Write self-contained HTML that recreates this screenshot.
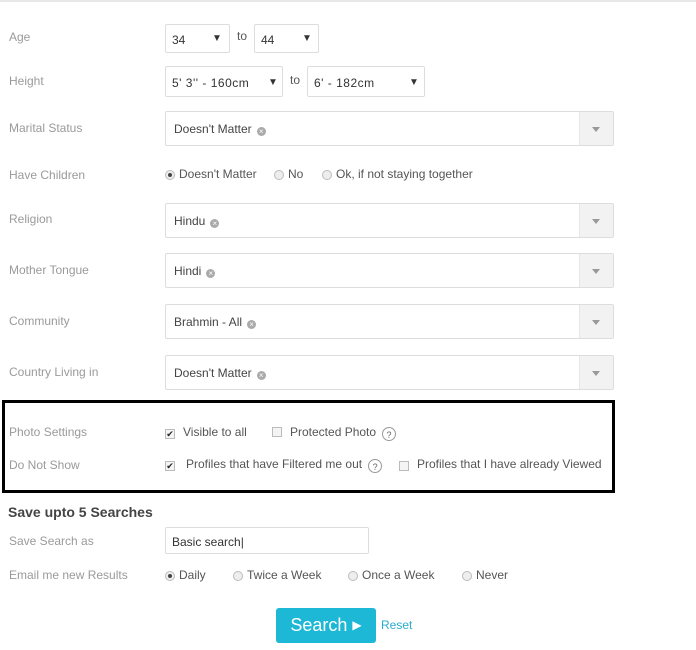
<!DOCTYPE html><html><head><style>
body{margin:0;width:696px;height:650px;background:#fff;font-family:"Liberation Sans",sans-serif;position:relative;overflow:hidden}
.a{position:absolute}
.l{position:absolute;left:9px;font-size:12px;color:#9a9a9a}
.s{position:absolute;border:1px solid #ddd;border-radius:2px;font-size:12px;color:#333;box-sizing:border-box;background:#fff}
.s span{position:absolute;left:6px}
.s i{position:absolute;font-style:normal;font-size:10px;color:#333}
.m{position:absolute;left:165px;width:449px;height:35px;border:1px solid #ddd;box-sizing:border-box;border-radius:2px;font-size:12px;color:#444}
.m span{position:absolute;left:8px;top:10px}
.m b{display:inline-block;width:9px;height:9px;border-radius:50%;background:#aaa;color:#fff;font-size:8px;line-height:9px;text-align:center;margin-left:5px;vertical-align:-1px;font-weight:normal}
.m i{position:absolute;right:0;top:0;bottom:0;width:33px;background:#f2f2f2;border-left:1px solid #e6e6e6}
.m i:after{content:"";position:absolute;left:12px;top:15px;border:4px solid transparent;border-top:5px solid #999}
.t{position:absolute;font-size:12px;color:#555}
.r{display:inline-block;width:10px;height:10px;border:1px solid #bbb;border-radius:50%;background:#eee;vertical-align:-2px;margin-right:4px;box-sizing:border-box;position:relative}
.r.on:after{content:"";position:absolute;left:2px;top:2px;width:4px;height:4px;border-radius:50%;background:#444}
.c{display:inline-block;width:10px;height:10px;border:1px solid #bbb;background:#f4f4f4;vertical-align:-1px;margin-right:8px;box-sizing:border-box;font-size:9px;line-height:8px;text-align:center;color:#222}
.q{display:inline-block;width:14px;height:14px;border:1px solid #999;border-radius:50%;font-size:9px;line-height:14px;text-align:center;color:#666;box-sizing:border-box;margin-left:6px;vertical-align:-2px}
</style></head><body>
<div class="a" style="left:0;top:0;width:696px;height:2px;background:#e8e8e8"></div>
<div class="l" style="top:30px">Age</div>
<div class="s" style="left:165px;top:24px;width:65px;height:29px"><span style="top:8px">34</span><i style="left:46px;top:8px">▼</i></div>
<div class="t" style="left:237px;top:29px">to</div>
<div class="s" style="left:254px;top:24px;width:65px;height:29px"><span style="top:8px">44</span><i style="left:47px;top:8px">▼</i></div>
<div class="l" style="top:74px">Height</div>
<div class="s" style="left:165px;top:66px;width:118px;height:31px"><span style="top:9px;letter-spacing:.5px">5' 3'' - 160cm</span><i style="left:102px;top:10px">▼</i></div>
<div class="t" style="left:290px;top:73px">to</div>
<div class="s" style="left:307px;top:66px;width:118px;height:31px"><span style="top:9px;letter-spacing:.5px">6' - 182cm</span><i style="left:101px;top:10px">▼</i></div>
<div class="l" style="top:121px">Marital Status</div>
<div class="m" style="top:111px"><span>Doesn't Matter<b>×</b></span><i></i></div>
<div class="l" style="top:168px">Have Children</div>
<div class="t" style="left:165px;top:167px"><span class="r on"></span>Doesn't Matter</div>
<div class="t" style="left:274px;top:167px"><span class="r"></span>No</div>
<div class="t" style="left:322px;top:167px"><span class="r"></span>Ok, if not staying together</div>
<div class="l" style="top:212px">Religion</div>
<div class="m" style="top:203px"><span>Hindu<b>×</b></span><i></i></div>
<div class="l" style="top:263px">Mother Tongue</div>
<div class="m" style="top:253px"><span>Hindi<b>×</b></span><i></i></div>
<div class="l" style="top:314px">Community</div>
<div class="m" style="top:304px"><span>Brahmin - All<b>×</b></span><i></i></div>
<div class="l" style="top:365px">Country Living in</div>
<div class="m" style="top:355px"><span>Doesn't Matter<b>×</b></span><i></i></div>
<div class="a" style="left:2px;top:400px;width:607px;height:87px;border:3px solid #000"></div>
<div class="l" style="top:425px">Photo Settings</div>
<div class="t" style="left:165px;top:425px"><span class="c">✔</span>Visible to all</div>
<div class="t" style="left:272px;top:425px"><span class="c"></span>Protected Photo<span class="q">?</span></div>
<div class="l" style="top:458px">Do Not Show</div>
<div class="t" style="left:165px;top:457px"><span class="c" style="margin-right:11px">✔</span>Profiles that have Filtered me out<span class="q">?</span></div>
<div class="t" style="left:399px;top:457px"><span class="c">&nbsp;</span>Profiles that I have already Viewed</div>
<div class="a" style="left:8px;top:504px;font-size:14px;font-weight:bold;color:#444">Save upto 5 Searches</div>
<div class="l" style="top:534px">Save Search as</div>
<div class="s" style="left:165px;top:527px;width:204px;height:27px"><span style="top:7px;left:6px;color:#333">Basic search|</span></div>
<div class="l" style="top:568px">Email me new Results</div>
<div class="t" style="left:165px;top:568px"><span class="r on"></span>Daily</div>
<div class="t" style="left:233px;top:568px"><span class="r"></span>Twice a Week</div>
<div class="t" style="left:348px;top:568px"><span class="r"></span>Once a Week</div>
<div class="t" style="left:462px;top:568px"><span class="r"></span>Never</div>
<div class="a" style="left:276px;top:608px;width:100px;height:35px;background:#1db8d6;border-radius:3px;color:#fff;font-size:18px;line-height:34px;text-align:center">Search <span style="font-size:12px;vertical-align:2px">▶</span></div>
<div class="a" style="left:381px;top:618px;font-size:12px;color:#2aaccc">Reset</div>
</body></html>
